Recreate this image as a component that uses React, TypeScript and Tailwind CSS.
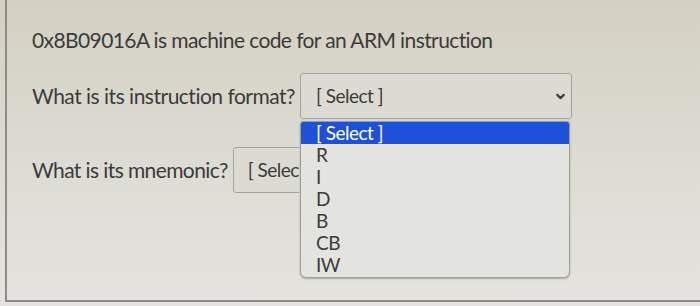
import React from 'react';
import { ChevronDown } from 'lucide-react';

const options = ['R', 'I', 'D', 'B', 'CB', 'IW'];

export default function App() {
  return (
    <div
      className="w-[700px] h-[306px] overflow-hidden bg-gradient-to-b from-[#d4d1c2] via-[#dcdbd3] to-[#e4e3df] text-[#3b3b3a]"
      style={{ fontFamily: 'Lato, "Open Sans", sans-serif' }}
    >
      <div className="ml-[5px] h-[302px] border-l-2 border-b-2 border-[#8d8c86] pl-[25px] pt-[28px]">
        <p className="text-[21px] leading-[24px] tracking-[-0.6px]">
          0x8B09016A is machine code for an ARM instruction
        </p>

        <div className="mt-[21px] flex items-center h-[46px]">
          <span className="text-[21px] tracking-[-0.5px] mr-[5px]">What is its instruction format?</span>
          <div className="relative w-[272px] h-[46px]">
            <div className="flex h-full items-center justify-between rounded-[3px] border border-[#a3a29c] bg-[#dcdbd3] pl-[15px] pr-[4px]">
              <span className="text-[19px] tracking-[-0.5px]">[ Select ]</span>
              <ChevronDown className="h-[13px] w-[13px] text-[#3d3d3d]" strokeWidth={4} />
            </div>

            <div className="absolute left-0 top-[48px] z-10 w-[270px] overflow-hidden rounded-b-[6px] rounded-t-[3px] border border-[#9d9c97] bg-[#e3e3e0] pb-[1px] shadow-[0_1px_2px_rgba(0,0,0,0.25)]">
              <div className="h-[22px] bg-[#1f50d8] pl-[15px] text-[19px] leading-[22px] tracking-[-0.5px] text-white">
                [ Select ]
              </div>
              {options.map((o) => (
                <div key={o} className="h-[22px] pl-[15px] text-[19px] leading-[22px] tracking-[-0.5px]">
                  {o}
                </div>
              ))}
            </div>
          </div>
        </div>

        <div className="mt-[28px] flex items-center h-[46px]">
          <span className="text-[21px] tracking-[-0.6px] mr-[5px]">What is its mnemonic?</span>
          <div className="h-[46px] w-[66px] overflow-hidden">
            <div className="flex h-[46px] w-[200px] items-center rounded-[3px] border border-[#a3a29c] bg-[#dcdbd3] pl-[14px]">
              <span className="text-[19px] tracking-[-0.5px]">[ Select ]</span>
            </div>
          </div>
        </div>
      </div>
    </div>
  );
}
